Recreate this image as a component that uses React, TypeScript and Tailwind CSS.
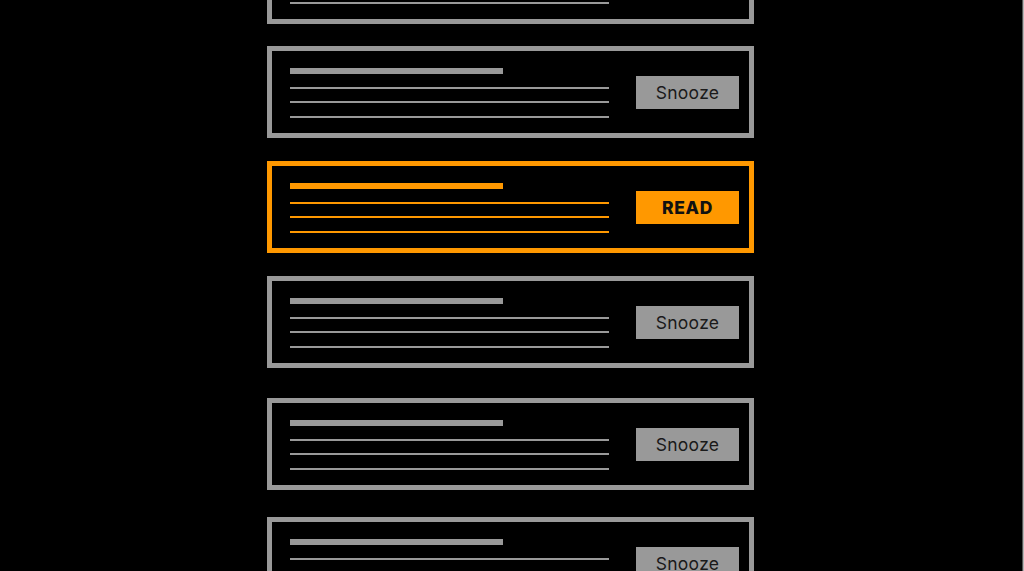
import React from "react";

type Card = { mt: string; active?: boolean };

const cards: Card[] = [
  { mt: "mt-[-68px]" },
  { mt: "mt-[22px]" },
  { mt: "mt-[23px]", active: true },
  { mt: "mt-[23px]" },
  { mt: "mt-[30px]" },
  { mt: "mt-[27px]" },
];

function NotificationCard({ card }: { card: Card }) {
  const active = !!card.active;
  return (
    <div
      className={`${card.mt} flex h-[92px] w-[487px] shrink-0 items-center border-[5px] pl-[18px] pr-[10px] ${
        active ? "border-[#ff9800]" : "border-[#999999]"
      }`}
    >
      <div className="flex w-[319px] flex-col pt-[1px]">
        <div className={`h-[6px] w-[213px] ${active ? "bg-[#ff9800]" : "bg-[#999999]"}`} />
        <div className={`mt-[13px] h-[2px] w-full ${active ? "bg-[#ff9800]" : "bg-[#999999]"}`} />
        <div className={`mt-[12px] h-[2px] w-full ${active ? "bg-[#ff9800]" : "bg-[#999999]"}`} />
        <div className={`mt-[13px] h-[2px] w-full ${active ? "bg-[#ff9800]" : "bg-[#999999]"}`} />
      </div>
      <div className="ml-auto">
        {active ? (
          <button className="flex h-[33px] w-[103px] items-center justify-center bg-[#ff9800] pt-[3px] font-['Inter',sans-serif] text-[17.5px] font-extrabold tracking-[0.6px] text-[#111]">
            READ
          </button>
        ) : (
          <button className="flex h-[33px] w-[103px] items-center justify-center bg-[#999999] pt-[3px] font-['Inter',sans-serif] text-[17.5px] font-normal tracking-[0.3px] text-[#1a1a1a]">
            Snooze
          </button>
        )}
      </div>
    </div>
  );
}

export default function App() {
  return (
    <div className="flex h-[571px] w-full overflow-hidden bg-black">
      <div className="flex flex-1 flex-col pl-[267px]">
        {cards.map((c, i) => (
          <NotificationCard key={i} card={c} />
        ))}
      </div>
      <div className="flex w-[2px] shrink-0">
        <div className="w-[1px] bg-[#555]" />
        <div className="w-[1px] bg-[#b5b5b5]" />
      </div>
    </div>
  );
}
